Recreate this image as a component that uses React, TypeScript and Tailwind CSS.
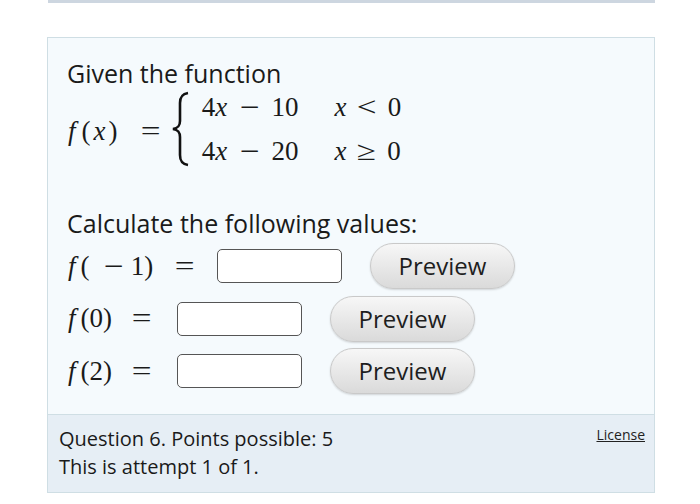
import React from "react";

const math = "font-['Liberation_Serif',serif] text-[27px] leading-none";

// wide operator, KaTeX style spacing
function Op({ children, className = "" }: { children: React.ReactNode; className?: string }) {
    return <span className={`inline-block scale-x-[1.3] ${className}`}>{children}</span>;
}

function Brace() {
    return (
        <svg width="20" height="76" viewBox="0 0 20 76" className="ml-[13px] mr-[11px]">
            <path
                d="M17 2 C11 3 9 6 9 12 L9 30 C9 35 7 37 2 38 C7 39 9 41 9 46 L9 64 C9 70 11 73 17 74"
                fill="none"
                stroke="#111"
                strokeWidth="2.6"
            />
        </svg>
    );
}

function PreviewButton() {
    return (
        <button className="w-[145px] h-[46px] rounded-full border border-[#c9c9c9] bg-gradient-to-b from-[#f7f7f7] to-[#dadada] shadow-[0_1px_2px_rgba(0,0,0,0.15)] text-[24px] text-[#1e1e1e]">
            Preview
        </button>
    );
}

function AnswerRow({ label, labelWidth }: { label: React.ReactNode; labelWidth: string }) {
    return (
        <div className="flex items-center h-[52.5px]">
            <div className={`${labelWidth} flex items-center`}>{label}</div>
            <div className="w-[125px] h-[34px] rounded-[5px] border-[1.5px] border-[#555] bg-white" />
            <div className="ml-[28px]">
                <PreviewButton />
            </div>
        </div>
    );
}

export default function App() {
    return (
        <div className="w-[700px] h-[504px] bg-white font-['Open_Sans',sans-serif] text-[#1a1a1a]">
            <div className="ml-[48px] w-[607px] h-[3px] bg-[#cdd6e0]" />

            <div className="ml-[47px] mt-[34px] w-[608px] border border-[#cfdee4] bg-[#f5fafd]">
                <div className="pl-[19px] pt-[19px] pb-[16px]">
                    <p className="text-[25px] leading-[32px]">Given the function</p>

                    {/* piecewise definition */}
                    <div className="flex items-center h-[80px]">
                        <span className={`${math} mt-[4px]`}>
                            <i className="mr-[6px] ml-[1px]">f</i>(<i className="mx-[3px]">x</i>)
                            <Op className="ml-[25px]">=</Op>
                        </span>
                        <Brace />
                        <div className={`${math} grid grid-cols-[auto_auto] gap-x-[36px] gap-y-[17px]`}>
                            <span>4<i className="mr-[1px]">x</i><Op className="mx-[14px]">−</Op>10</span>
                            <span><i>x</i><Op className="mx-[13px]">&lt;</Op>0</span>
                            <span>4<i className="mr-[1px]">x</i><Op className="mx-[14px]">−</Op>20</span>
                            <span><i>x</i><Op className="mx-[13px]">≥</Op>0</span>
                        </div>
                    </div>

                    <p className="mt-[38px] text-[25px] leading-[32px]">Calculate the following values:</p>

                    <div className="mt-[1px]">
                        <AnswerRow
                            labelWidth="w-[150px]"
                            label={
                                <span className={math}>
                                    <i className="mr-[5px] ml-[1px]">f</i>(<Op className="ml-[16px] mr-[10px]">−</Op>1)
                                    <Op className="ml-[24px]">=</Op>
                                </span>
                            }
                        />
                        <AnswerRow
                            labelWidth="w-[110px]"
                            label={
                                <span className={math}>
                                    <i className="mr-[5px] ml-[1px]">f</i>(0)<Op className="ml-[22px]">=</Op>
                                </span>
                            }
                        />
                        <AnswerRow
                            labelWidth="w-[110px]"
                            label={
                                <span className={math}>
                                    <i className="mr-[5px] ml-[1px]">f</i>(2)<Op className="ml-[22px]">=</Op>
                                </span>
                            }
                        />
                    </div>
                </div>

                <div className="border-t border-[#cfdee4] bg-[#e6eef5] pl-[11px] pr-[9px] pt-[10px] pb-[11px] flex justify-between">
                    <div className="text-[20px] leading-[28px] text-[#1a1a1a]">
                        <p>Question 6. Points possible: 5</p>
                        <p>This is attempt 1 of 1.</p>
                    </div>
                    <a className="text-[14px] leading-[20px] underline text-[#222]">License</a>
                </div>
            </div>
        </div>
    );
}
